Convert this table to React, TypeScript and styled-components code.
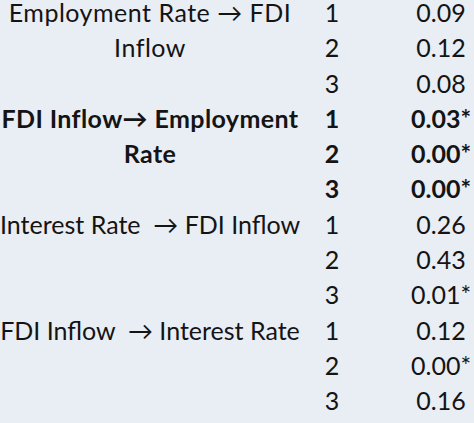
import React from 'react';
import styled, { createGlobalStyle } from 'styled-components';

const rowHeight = 35.3;
const textLine = 25;
const ink = '#141414';

const GlobalStyle = createGlobalStyle`
    html, body {
        margin: 0;
        padding: 0;
        background: #e9edf4;
        overflow: hidden;
    }
`;

const Table = styled.div`
    display: grid;
    grid-template-columns: 300px 64px 110px;
    grid-auto-rows: ${rowHeight}px;
    width: 474px;
    height: 423px;
    font-family: Lato, 'Open Sans', sans-serif;
    font-size: 25px;
    color: ${ink};
`;

const Label = styled.div<{ $bold?: boolean; $tracking: number }>`
    grid-column: 1;
    text-align: center;
    white-space: pre;
    letter-spacing: ${props => props.$tracking}px;
    font-weight: ${props => (props.$bold ? 700 : 400)};
`;

const LabelLine = styled.div`
    height: ${rowHeight}px;
    line-height: ${textLine}px;
`;

const Lag = styled.div<{ $bold?: boolean }>`
    grid-column: 2;
    text-align: center;
    line-height: ${textLine}px;
    font-weight: ${props => (props.$bold ? 700 : 400)};
`;

const PValue = styled.div<{ $bold?: boolean }>`
    grid-column: 3;
    text-align: center;
    padding-left: 44px;
    line-height: ${textLine}px;
    font-weight: ${props => (props.$bold ? 700 : 400)};
`;

type Group = {
    lines: string[];
    bold?: boolean;
    tracking: number;
    values: string[];
};

const groups: Group[] = [
    { lines: ['Employment Rate → FDI', 'Inflow'], tracking: 0.5, values: ['0.09', '0.12', '0.08'] },
    { lines: ['FDI Inflow→ Employment', 'Rate'], bold: true, tracking: 0.4, values: ['0.03*', '0.00*', '0.00*'] },
    { lines: ['Interest Rate  → FDI Inflow'], tracking: 0, values: ['0.26', '0.43', '0.01*'] },
    { lines: ['FDI Inflow  → Interest Rate'], tracking: 0, values: ['0.12', '0.00*', '0.16'] },
];

const App = () => (
    <>
        <GlobalStyle />
        <Table>
            {groups.map((g, i) => (
                <React.Fragment key={i}>
                    <Label $bold={g.bold} $tracking={g.tracking} style={{ gridRow: `${i * 3 + 1} / span 3` }}>
                        {g.lines.map(line => (
                            <LabelLine key={line}>{line}</LabelLine>
                        ))}
                    </Label>
                    {g.values.map((v, j) => (
                        <React.Fragment key={j}>
                            <Lag $bold={g.bold}>{j + 1}</Lag>
                            <PValue $bold={g.bold}>{v}</PValue>
                        </React.Fragment>
                    ))}
                </React.Fragment>
            ))}
        </Table>
    </>
);

export default App;
